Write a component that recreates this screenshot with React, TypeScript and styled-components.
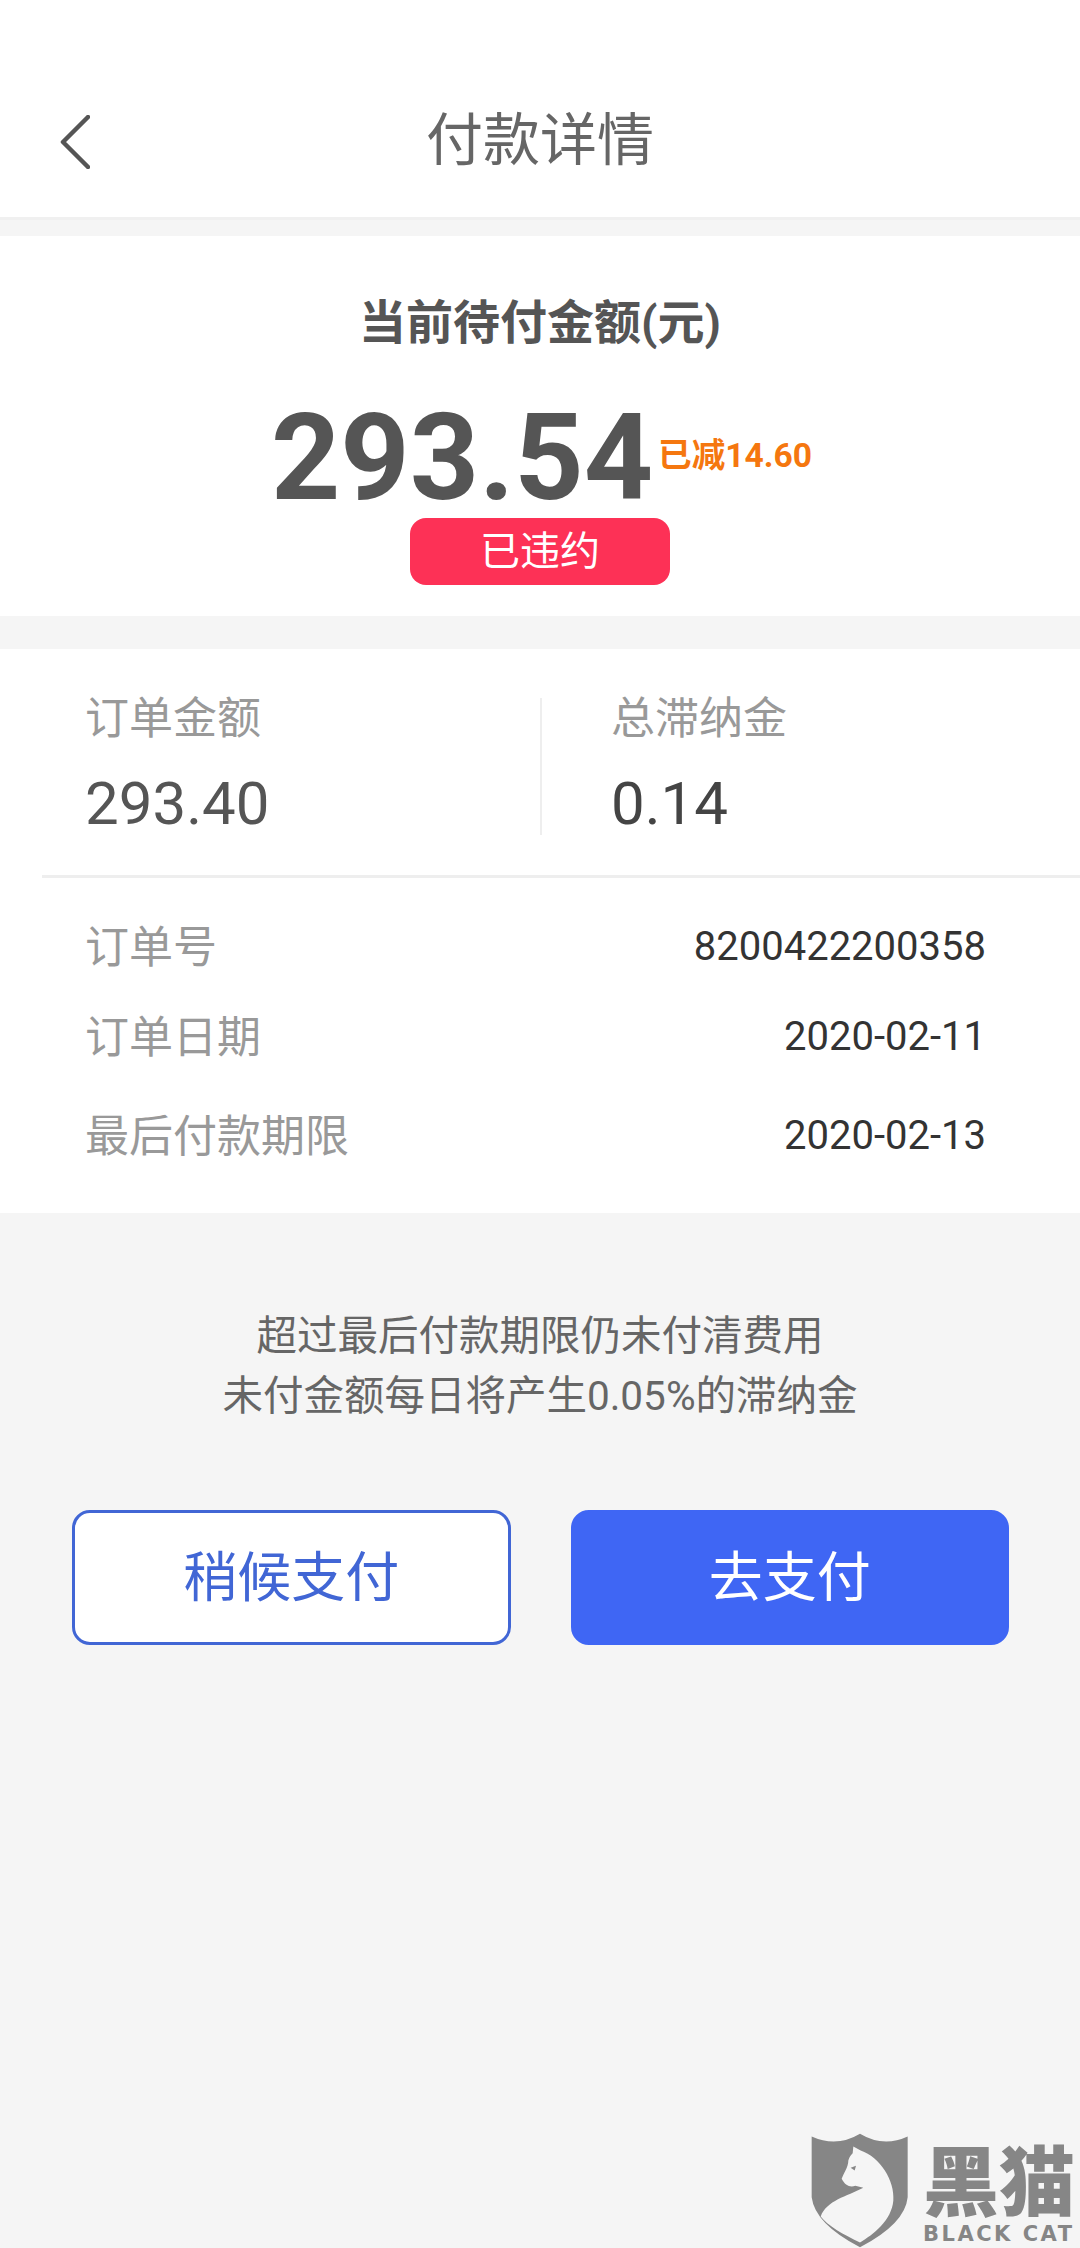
import React from 'react';
import styled, { createGlobalStyle } from 'styled-components';

const GlobalStyle = createGlobalStyle`
    html, body {
        margin: 0;
        padding: 0;
        background: #f5f5f5;
    }
    * {
        box-sizing: border-box;
    }
    body {
        font-family: Roboto, 'Noto Sans CJK SC', sans-serif;
    }
`;

const orderRows = [
    { label: '订单号', value: '8200422200358', height: 90 },
    { label: '订单日期', value: '2020-02-11', height: 90 },
    { label: '最后付款期限', value: '2020-02-13', height: 108 }
];

function BackIcon() {
    return (
        <svg width="30" height="54" viewBox="0 0 30 54" fill="none">
            <path d="M28 2 L3 27 L28 52" stroke="#555" strokeWidth="4.5" strokeLinecap="round" strokeLinejoin="round" />
        </svg>
    );
}

function ShieldLogo() {
    return (
        <svg width="100" height="117" viewBox="90 65 300 350">
            <path
                d="M95 78 Q170 112 240 70 Q310 112 383 78 L383 260 Q375 340 240 410 Q105 340 95 260 Z"
                fill="#868686"
            />
            <path
                d="M218 128 L220 108 L242 120 C 300 140 345 210 340 270 C 335 330 280 372 240 396 C 190 372 142 345 122 318 C 140 270 200 258 250 232 L 226 226 C 210 232 195 225 185 205 C 190 190 205 170 205 150 C 208 138 214 132 218 128 Z"
                fill="#f5f5f5"
            />
            <path d="M212 172 L228 166 L224 180 Z" fill="#868686" />
        </svg>
    );
}

export default function App() {
    return (
        <Page>
            <GlobalStyle />
            <Header>
                <BackButton>
                    <BackIcon />
                </BackButton>
                <HeaderTitle>付款详情</HeaderTitle>
            </Header>

            <SummaryCard>
                <SummaryTitle>当前待付金额(元)</SummaryTitle>
                <AmountRow>
                    <Amount>293.54</Amount>
                    <Discount>已减14.60</Discount>
                </AmountRow>
                <StatusBadge>已违约</StatusBadge>
            </SummaryCard>

            <DetailCard>
                <StatsRow>
                    <Stat>
                        <StatLabel>订单金额</StatLabel>
                        <StatValue>293.40</StatValue>
                    </Stat>
                    <Stat $divided>
                        <StatLabel>总滞纳金</StatLabel>
                        <StatValue $dark>0.14</StatValue>
                    </Stat>
                </StatsRow>
                <OrderList>
                    {orderRows.map((row) => (
                        <OrderRow key={row.label} $height={row.height}>
                            <RowLabel>{row.label}</RowLabel>
                            <RowValue>{row.value}</RowValue>
                        </OrderRow>
                    ))}
                </OrderList>
            </DetailCard>

            <Notice>
                超过最后付款期限仍未付清费用
                <br />
                未付金额每日将产生0.05%的滞纳金
            </Notice>

            <Actions>
                <ActionButton>稍候支付</ActionButton>
                <ActionButton $primary>去支付</ActionButton>
            </Actions>

            <Watermark>
                <ShieldLogo />
                <WatermarkText>
                    <WatermarkName>黑猫</WatermarkName>
                    <WatermarkLatin>BLACK CAT</WatermarkLatin>
                </WatermarkText>
            </Watermark>
        </Page>
    );
}

const Page = styled.div`
    position: relative;
    width: 1080px;
    height: 2248px;
    overflow: hidden;
    background-color: #f5f5f5;
`;

const Header = styled.div`
    display: grid;
    grid-template-columns: 1fr auto 1fr;
    align-items: center;
    height: 220px;
    padding-top: 64px;
    background-color: #fff;
    border-bottom: 3px solid #f0f0f0;
`;

const BackButton = styled.div`
    display: flex;
    padding-left: 60px;
    padding-top: 2px;
`;

const HeaderTitle = styled.div`
    font-size: 57px;
    line-height: 80px;
    color: #666;
`;

const SummaryCard = styled.div`
    display: flex;
    flex-direction: column;
    align-items: center;
    height: 380px;
    margin-top: 16px;
    padding-top: 55px;
    background-color: #fff;
`;

const SummaryTitle = styled.div`
    font-size: 47px;
    line-height: 64px;
    font-weight: 700;
    color: #555;
`;

const AmountRow = styled.div`
    display: flex;
    align-items: center;
    height: 120px;
    margin-top: 43px;
    padding-left: 3px;
`;

const Amount = styled.div`
    font-size: 121px;
    line-height: 120px;
    font-weight: 700;
    color: #555;
`;

const Discount = styled.div`
    margin-left: 5px;
    margin-bottom: 12px;
    font-size: 33.6px;
    font-weight: 700;
    color: #f5770f;
`;

const StatusBadge = styled.div`
    width: 260px;
    height: 67px;
    border-radius: 16px;
    background-color: #fd3156;
    font-size: 40px;
    line-height: 67px;
    text-align: center;
    color: #fff;
`;

const DetailCard = styled.div`
    margin-top: 33px;
    background-color: #fff;
    padding-bottom: 24px;
`;

const StatsRow = styled.div`
    display: grid;
    grid-template-columns: 498px 1fr;
    height: 229px;
    margin-left: 42px;
    padding-top: 49px;
    border-bottom: 3px solid #eee;
`;

const Stat = styled.div<{ $divided?: boolean }>`
    height: 137px;
    padding-left: ${(props) => (props.$divided ? '69px' : '43px')};
    border-left: ${(props) => (props.$divided ? '2px solid #eee' : 'none')};
`;

const StatLabel = styled.div`
    margin-top: -10px;
    font-size: 44px;
    line-height: 62px;
    color: #999;
`;

const StatValue = styled.div<{ $dark?: boolean }>`
    margin-top: 19px;
    font-size: 60px;
    line-height: 70px;
    color: ${(props) => (props.$dark ? '#444' : '#555')};
`;

const OrderList = styled.div`
    padding: 23px 94px 0 85px;
`;

const OrderRow = styled.div<{ $height: number }>`
    display: flex;
    align-items: center;
    justify-content: space-between;
    height: ${(props) => props.$height}px;
`;

const RowLabel = styled.div`
    margin-bottom: 5px;
    font-size: 44px;
    color: #999;
`;

const RowValue = styled.div`
    font-size: 40px;
    color: #333;
`;

const Notice = styled.div`
    margin-top: 93px;
    font-size: 40.5px;
    line-height: 60px;
    text-align: center;
    color: #666;
`;

const Actions = styled.div`
    display: flex;
    gap: 60px;
    margin-top: 84px;
    padding: 0 71px 0 72px;
`;

const ActionButton = styled.div<{ $primary?: boolean }>`
    flex: 1;
    height: 135px;
    border: 3px solid ${(props) => (props.$primary ? '#3f66f4' : '#4166d5')};
    border-radius: 18px;
    background-color: ${(props) => (props.$primary ? '#3f66f4' : '#fff')};
    font-size: 54px;
    line-height: 131px;
    text-align: center;
    color: ${(props) => (props.$primary ? '#fff' : '#4166d5')};
`;

const Watermark = styled.div`
    position: absolute;
    left: 810px;
    top: 2132px;
    display: flex;
    gap: 13px;
`;

const WatermarkText = styled.div`
    display: flex;
    flex-direction: column;
    align-items: flex-start;
`;

const WatermarkName = styled.div`
    font-family: 'Noto Sans CJK SC', sans-serif;
    font-size: 76px;
    line-height: 90px;
    font-weight: 900;
    color: #868686;
`;

const WatermarkLatin = styled.div`
    font-family: 'DejaVu Sans', sans-serif;
    font-size: 21px;
    line-height: 24px;
    font-weight: 700;
    letter-spacing: 2.5px;
    white-space: nowrap;
    color: #868686;
`;
